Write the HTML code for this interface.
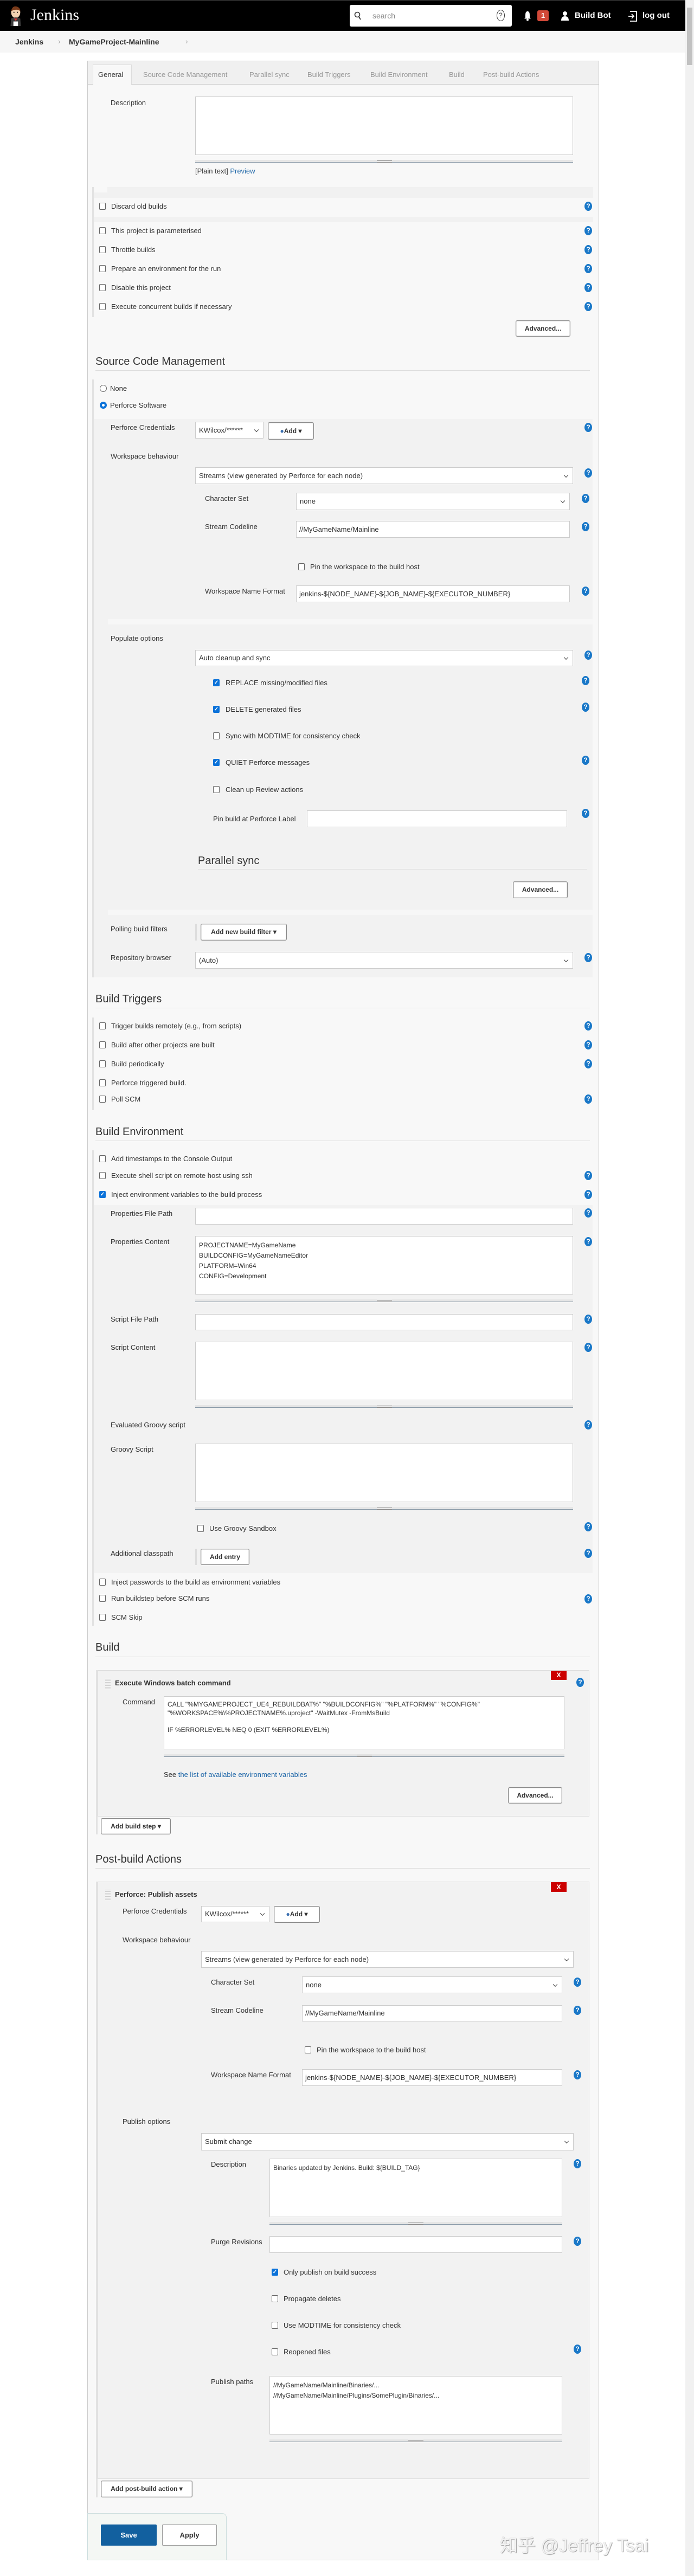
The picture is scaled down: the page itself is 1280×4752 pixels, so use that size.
<!DOCTYPE html>
<html><head><meta charset="utf-8">
<style>
*{box-sizing:border-box}
body{margin:0;width:1280px;height:4752px;position:relative;background:#fff;font-family:"Liberation Sans",sans-serif;overflow:hidden}
.a{position:absolute}
.l{position:absolute;font-size:13px;line-height:16px;color:#333;white-space:nowrap}
.f{position:absolute;background:#fff;border:1px solid #ccc;font-size:13px;color:#333;padding:0 6px;white-space:nowrap;overflow:hidden}
.s::after{content:"";position:absolute;right:9px;top:50%;width:5px;height:5px;border-right:1.5px solid #333;border-bottom:1.5px solid #333;transform:translateY(-70%) rotate(45deg)}
.h{position:absolute;width:14px;height:17px;border-radius:50%;background:#1a78c8;color:#fff;font-weight:bold;font-size:12px;line-height:17px;text-align:center}
.c{position:absolute;width:12px;height:13px;border:1px solid #666;border-radius:2px;background:#fff}
.cc{background:#0b72d9;border-color:#0b72d9;color:#fff;font-size:10px;line-height:12px;text-align:center;font-weight:bold}
.r{position:absolute;width:13px;height:13px;border:1px solid #666;border-radius:50%;background:#fff}
.b{position:absolute;background:#fff;border:1px solid #888;box-shadow:inset 0 0 0 1px #ddd;border-radius:3px;font-size:12px;font-weight:bold;color:#333;text-align:center;white-space:nowrap}
.rz{position:absolute;height:5px;background:#e6e6e6;border-bottom:1px solid #8a9aa8}
.rz::after{content:"";position:absolute;left:50%;margin-left:-14px;width:28px;top:1px;height:2px;border-top:1px solid #888;border-bottom:1px solid #888}
.hd{position:absolute;font-size:20px;color:#333;white-space:nowrap}
.hl{position:absolute;height:1px;background:#ddd}
.lb{position:absolute;width:3px;background:#e2e2e2}
.nb{position:absolute;background:#f2f2f2}
.ta{position:absolute;background:#fff;border:1px solid #ccc;font-size:12px;color:#333;padding:4px 6px;white-space:pre;line-height:19px}
</style></head><body>

<!-- header -->
<div class="a" style="left:0;top:0;width:1280px;height:57px;background:#000;border-top:1px solid #444"></div>
<svg class="a" style="left:14px;top:10px" width="32" height="38" viewBox="0 0 30 36">
<ellipse cx="14" cy="12" rx="8" ry="10" fill="#f0d0b0"/><path d="M6 10 Q8 0 16 2 Q22 4 22 10 Q16 5 6 10Z" fill="#7a3b1a"/>
<path d="M6 23 Q14 19 22 23 L23 36 L5 36Z" fill="#3b3b3b"/><path d="M11 23 L17 23 L14 27Z" fill="#d33"/><rect x="10" y="28" width="8" height="8" fill="#fff"/>
<circle cx="11" cy="12" r="1" fill="#000"/><circle cx="17" cy="12" r="1" fill="#000"/></svg>
<div class="a" style="left:56px;top:12px;font-family:'Liberation Serif',serif;font-size:30px;color:#fff;line-height:32px">Jenkins</div>
<div class="a" style="left:645px;top:9px;width:299px;height:40px;background:#fff;border-radius:3px"></div>
<svg class="a" style="left:653px;top:19px" width="14" height="20" viewBox="0 0 14 18"><circle cx="6" cy="7" r="4.5" fill="none" stroke="#333" stroke-width="1.6"/><path d="M9 11 L12 16" stroke="#333" stroke-width="1.8"/></svg>
<div class="a" style="left:687px;top:21px;font-size:14px;color:#888">search</div>
<div class="a" style="left:916px;top:18px;width:15px;height:21px;border:1.5px solid #333;border-radius:50%;font-size:12px;line-height:18px;text-align:center;color:#333">?</div>
<svg class="a" style="left:966px;top:18px" width="14" height="22" viewBox="0 0 14 19"><path d="M7 1 Q3 2 3 8 L3 13 L1 15 L13 15 L11 13 L11 8 Q11 2 7 1Z" fill="#fff"/><circle cx="7" cy="17" r="2" fill="#fff"/></svg>
<div class="a" style="left:991px;top:19px;width:21px;height:20px;background:#d24939;border-radius:3px;color:#fff;font-size:13px;font-weight:bold;text-align:center;line-height:20px">1</div>
<svg class="a" style="left:1034px;top:19px" width="16" height="20" viewBox="0 0 16 18"><circle cx="8" cy="5" r="4" fill="#fff"/><path d="M1 18 Q1 10 8 10 Q15 10 15 18Z" fill="#fff"/></svg>
<div class="a" style="left:1060px;top:20px;font-size:15px;font-weight:bold;color:#fff">Build Bot</div>
<svg class="a" style="left:1158px;top:18px" width="22" height="24" viewBox="0 0 22 22"><path d="M4 2 H16 V20 H4" fill="none" stroke="#fff" stroke-width="1.8"/><path d="M1 11 H11 M7 7 L11 11 L7 15" fill="none" stroke="#fff" stroke-width="1.8"/></svg>
<div class="a" style="left:1185px;top:20px;font-size:15px;font-weight:bold;color:#fff">log out</div>

<!-- scrollbar -->
<div class="a" style="left:1264px;top:0;width:16px;height:4752px;background:#f1f1f1"></div>
<div class="a" style="left:1267px;top:14px;width:10px;height:106px;background:#c1c1c1"></div>

<!-- breadcrumb -->
<div class="a" style="left:0;top:57px;width:1264px;height:40px;background:#f6f6f6"></div>
<div class="a" style="left:28px;top:69px;font-size:14px;font-weight:bold;color:#333">Jenkins</div>
<div class="a" style="left:107px;top:68px;font-size:14px;color:#aaa">›</div>
<div class="a" style="left:127px;top:69px;font-size:14px;font-weight:bold;color:#333">MyGameProject-Mainline</div>
<div class="a" style="left:342px;top:68px;font-size:14px;color:#aaa">›</div>

<!-- main panel -->
<div class="a" style="left:161px;top:112px;width:944px;height:4611px;background:#f8f8f8;border:1px solid #ccc"></div>
<div class="a" style="left:162px;top:113px;width:942px;height:43px;background:#f0f0f0;border-bottom:1px solid #ccc"></div>
<div class="a" style="left:171px;top:119px;width:72px;height:38px;background:#f8f8f8;border:1px solid #ddd;border-bottom:none"></div>
<div class="l" style="left:181px;top:130px;color:#333">General</div>
<div class="l" style="left:264px;top:130px;color:#999">Source Code Management</div>
<div class="l" style="left:460px;top:130px;color:#999">Parallel sync</div>
<div class="l" style="left:567px;top:130px;color:#999">Build Triggers</div>
<div class="l" style="left:683px;top:130px;color:#999">Build Environment</div>
<div class="l" style="left:828px;top:130px;color:#999">Build</div>
<div class="l" style="left:891px;top:130px;color:#999">Post-build Actions</div>

<!-- General -->
<div class="l" style="left:204px;top:182px">Description</div>
<div class="f" style="left:360px;top:178px;width:697px;height:108px"></div>
<div class="rz" style="left:360px;top:295px;width:697px"></div>
<div class="l" style="left:360px;top:308px">[Plain text] <span style="color:#1f67a8">Preview</span></div>

<div class="lb" style="left:170px;top:345px;height:240px"></div>
<div class="a" style="left:198px;top:345px;width:896px;height:10px;background:#f1f1f1"></div>
<div class="a" style="left:173px;top:355px;width:921px;height:10px;background:#f1f1f1"></div>
<div class="c" style="left:183px;top:374px"></div><div class="l" style="left:205px;top:373px">Discard old builds</div><div class="h" style="left:1078px;top:372px">?</div>
<div class="a" style="left:173px;top:400px;width:921px;height:10px;background:#f1f1f1"></div>
<div class="c" style="left:183px;top:419px"></div><div class="l" style="left:205px;top:418px">This project is parameterised</div><div class="h" style="left:1078px;top:417px">?</div>
<div class="c" style="left:183px;top:454px"></div><div class="l" style="left:205px;top:453px">Throttle builds</div><div class="h" style="left:1078px;top:452px">?</div>
<div class="c" style="left:183px;top:489px"></div><div class="l" style="left:205px;top:488px">Prepare an environment for the run</div><div class="h" style="left:1078px;top:487px">?</div>
<div class="c" style="left:183px;top:524px"></div><div class="l" style="left:205px;top:523px">Disable this project</div><div class="h" style="left:1078px;top:522px">?</div>
<div class="c" style="left:183px;top:559px"></div><div class="l" style="left:205px;top:558px">Execute concurrent builds if necessary</div><div class="h" style="left:1078px;top:557px">?</div>
<div class="b" style="left:951px;top:591px;width:101px;height:30px;line-height:28px">Advanced...</div>

<!-- SCM -->
<div class="hd" style="left:176px;top:656px">Source Code Management</div>
<div class="hl" style="left:176px;top:683px;width:912px"></div>
<div class="lb" style="left:170px;top:700px;height:1103px"></div>
<div class="r" style="left:184px;top:710px"></div><div class="l" style="left:203px;top:709px">None</div>
<div class="r" style="left:184px;top:741px;border:4px solid #0b72d9"></div><div class="l" style="left:203px;top:740px">Perforce Software</div>
<div class="nb" style="left:173px;top:773px;width:920px;height:1030px"></div>
<div class="l" style="left:204px;top:781px">Perforce Credentials</div>
<div class="f s" style="left:360px;top:778px;width:126px;height:31px;line-height:29px">KWilcox/******</div>
<div class="b" style="left:494px;top:779px;width:85px;height:32px;line-height:30px"><span style="color:#3a6fb0">&#9679;</span>Add &#9662;</div>
<div class="h" style="left:1078px;top:780px">?</div>
<div class="l" style="left:204px;top:834px">Workspace behaviour</div>
<div class="f s" style="left:360px;top:862px;width:697px;height:31px;line-height:29px">Streams (view generated by Perforce for each node)</div>
<div class="h" style="left:1078px;top:864px">?</div>
<div class="l" style="left:378px;top:912px">Character Set</div>
<div class="f s" style="left:546px;top:909px;width:505px;height:32px;line-height:30px">none</div>
<div class="h" style="left:1073px;top:911px">?</div>
<div class="l" style="left:378px;top:964px">Stream Codeline</div>
<div class="f" style="left:546px;top:961px;width:505px;height:31px;line-height:29px;padding-left:5px">//MyGameName/Mainline</div>
<div class="h" style="left:1073px;top:963px">?</div>
<div class="c" style="left:550px;top:1039px"></div><div class="l" style="left:572px;top:1038px">Pin the workspace to the build host</div>
<div class="l" style="left:378px;top:1083px">Workspace Name Format</div>
<div class="f" style="left:546px;top:1080px;width:505px;height:31px;line-height:29px;padding-left:5px">jenkins-${NODE_NAME}-${JOB_NAME}-${EXECUTOR_NUMBER}</div>
<div class="h" style="left:1073px;top:1082px">?</div>

<div class="a" style="left:199px;top:1142px;width:894px;height:10px;background:#f7f7f7"></div>
<div class="l" style="left:204px;top:1170px">Populate options</div>
<div class="f s" style="left:360px;top:1199px;width:697px;height:30px;line-height:28px">Auto cleanup and sync</div>
<div class="h" style="left:1078px;top:1200px">?</div>
<div class="c cc" style="left:393px;top:1253px">✓</div><div class="l" style="left:416px;top:1252px">REPLACE missing/modified files</div><div class="h" style="left:1073px;top:1247px">?</div>
<div class="c cc" style="left:393px;top:1302px">✓</div><div class="l" style="left:416px;top:1301px">DELETE generated files</div><div class="h" style="left:1073px;top:1296px">?</div>
<div class="c" style="left:393px;top:1351px"></div><div class="l" style="left:416px;top:1350px">Sync with MODTIME for consistency check</div>
<div class="c cc" style="left:393px;top:1400px">✓</div><div class="l" style="left:416px;top:1399px">QUIET Perforce messages</div><div class="h" style="left:1073px;top:1394px">?</div>
<div class="c" style="left:393px;top:1450px"></div><div class="l" style="left:416px;top:1449px">Clean up Review actions</div>
<div class="l" style="left:393px;top:1503px">Pin build at Perforce Label</div>
<div class="f" style="left:566px;top:1495px;width:480px;height:31px"></div>
<div class="h" style="left:1073px;top:1492px">?</div>
<div class="hd" style="left:365px;top:1577px">Parallel sync</div>
<div class="hl" style="left:365px;top:1603px;width:718px"></div>
<div class="b" style="left:946px;top:1626px;width:101px;height:31px;line-height:29px">Advanced...</div>
<div class="a" style="left:199px;top:1678px;width:894px;height:10px;background:#f7f7f7"></div>
<div class="l" style="left:204px;top:1706px">Polling build filters</div>
<div class="a" style="left:360px;top:1704px;width:3px;height:31px;background:#ddd"></div>
<div class="b" style="left:370px;top:1704px;width:159px;height:31px;line-height:29px">Add new build filter &#9662;</div>
<div class="l" style="left:204px;top:1759px">Repository browser</div>
<div class="f s" style="left:360px;top:1756px;width:697px;height:31px;line-height:29px">(Auto)</div>
<div class="h" style="left:1078px;top:1758px">?</div>

<!-- Build Triggers -->
<div class="hd" style="left:176px;top:1832px">Build Triggers</div>
<div class="hl" style="left:176px;top:1859px;width:912px"></div>
<div class="lb" style="left:170px;top:1877px;height:171px"></div>
<div class="c" style="left:183px;top:1886px"></div><div class="l" style="left:205px;top:1885px">Trigger builds remotely (e.g., from scripts)</div><div class="h" style="left:1078px;top:1884px">?</div>
<div class="c" style="left:183px;top:1921px"></div><div class="l" style="left:205px;top:1920px">Build after other projects are built</div><div class="h" style="left:1078px;top:1919px">?</div>
<div class="c" style="left:183px;top:1956px"></div><div class="l" style="left:205px;top:1955px">Build periodically</div><div class="h" style="left:1078px;top:1954px">?</div>
<div class="c" style="left:183px;top:1991px"></div><div class="l" style="left:205px;top:1990px">Perforce triggered build.</div>
<div class="c" style="left:183px;top:2021px"></div><div class="l" style="left:205px;top:2020px">Poll SCM</div><div class="h" style="left:1078px;top:2019px">?</div>

<!-- Build Environment -->
<div class="hd" style="left:176px;top:2077px">Build Environment</div>
<div class="hl" style="left:176px;top:2104px;width:912px"></div>
<div class="lb" style="left:170px;top:2122px;height:877px"></div>
<div class="c" style="left:183px;top:2131px"></div><div class="l" style="left:205px;top:2130px">Add timestamps to the Console Output</div>
<div class="c" style="left:183px;top:2162px"></div><div class="l" style="left:205px;top:2161px">Execute shell script on remote host using ssh</div><div class="h" style="left:1078px;top:2160px">?</div>
<div class="c cc" style="left:183px;top:2197px">✓</div><div class="l" style="left:205px;top:2196px">Inject environment variables to the build process</div><div class="h" style="left:1078px;top:2195px">?</div>
<div class="nb" style="left:173px;top:2223px;width:920px;height:679px"></div>
<div class="l" style="left:204px;top:2231px">Properties File Path</div>
<div class="f" style="left:360px;top:2228px;width:697px;height:31px"></div>
<div class="h" style="left:1078px;top:2229px">?</div>
<div class="l" style="left:204px;top:2283px">Properties Content</div>
<div class="ta" style="left:360px;top:2280px;width:697px;height:108px;padding-top:7px">PROJECTNAME=MyGameName
BUILDCONFIG=MyGameNameEditor
PLATFORM=Win64
CONFIG=Development</div>
<div class="h" style="left:1078px;top:2282px">?</div>
<div class="rz" style="left:360px;top:2397px;width:697px"></div>
<div class="l" style="left:204px;top:2426px">Script File Path</div>
<div class="f" style="left:360px;top:2424px;width:697px;height:30px"></div>
<div class="h" style="left:1078px;top:2425px">?</div>
<div class="l" style="left:204px;top:2478px">Script Content</div>
<div class="f" style="left:360px;top:2475px;width:697px;height:108px"></div>
<div class="h" style="left:1078px;top:2477px">?</div>
<div class="rz" style="left:360px;top:2592px;width:697px"></div>
<div class="l" style="left:204px;top:2621px">Evaluated Groovy script</div>
<div class="h" style="left:1078px;top:2620px">?</div>
<div class="l" style="left:204px;top:2666px">Groovy Script</div>
<div class="f" style="left:360px;top:2663px;width:697px;height:108px"></div>
<div class="rz" style="left:360px;top:2780px;width:697px"></div>
<div class="c" style="left:364px;top:2813px"></div><div class="l" style="left:386px;top:2812px">Use Groovy Sandbox</div><div class="h" style="left:1078px;top:2808px">?</div>
<div class="l" style="left:204px;top:2858px">Additional classpath</div>
<div class="a" style="left:360px;top:2857px;width:3px;height:30px;background:#ddd"></div>
<div class="b" style="left:370px;top:2857px;width:90px;height:30px;line-height:28px">Add entry</div>
<div class="h" style="left:1078px;top:2857px">?</div>
<div class="c" style="left:183px;top:2912px"></div><div class="l" style="left:205px;top:2911px">Inject passwords to the build as environment variables</div>
<div class="c" style="left:183px;top:2942px"></div><div class="l" style="left:205px;top:2941px">Run buildstep before SCM runs</div><div class="h" style="left:1078px;top:2941px">?</div>
<div class="c" style="left:183px;top:2977px"></div><div class="l" style="left:205px;top:2976px">SCM Skip</div>

<!-- Build -->
<div class="hd" style="left:176px;top:3028px">Build</div>
<div class="hl" style="left:176px;top:3056px;width:912px"></div>
<div class="lb" style="left:177px;top:3081px;height:303px"></div>
<div class="a" style="left:180px;top:3081px;width:907px;height:270px;background:#f2f2f2;border:1px solid #ddd"></div>
<div class="a" style="left:1016px;top:3082px;width:29px;height:17px;background:#c00;color:#fff;font-size:12px;font-weight:bold;text-align:center;line-height:17px">X</div>
<div class="h" style="left:1063px;top:3095px">?</div>
<div class="a" style="left:194px;top:3096px;width:10px;height:20px;background:repeating-linear-gradient(0deg,#ccc 0 1px,transparent 1px 3px)"></div>
<div class="l" style="left:212px;top:3097px;font-weight:bold">Execute Windows batch command</div>
<div class="l" style="left:226px;top:3132px">Command</div>
<div class="ta" style="left:302px;top:3129px;width:739px;height:98px;line-height:15.5px;padding-top:7px">CALL "%MYGAMEPROJECT_UE4_REBUILDBAT%" "%BUILDCONFIG%" "%PLATFORM%" "%CONFIG%"
"%WORKSPACE%\%PROJECTNAME%.uproject" -WaitMutex -FromMsBuild

IF %ERRORLEVEL% NEQ 0 (EXIT %ERRORLEVEL%)</div>
<div class="rz" style="left:302px;top:3236px;width:739px"></div>
<div class="l" style="left:302px;top:3266px">See <span style="color:#1f67a8">the list of available environment variables</span></div>
<div class="b" style="left:937px;top:3297px;width:100px;height:30px;line-height:28px">Advanced...</div>
<div class="b" style="left:186px;top:3354px;width:129px;height:30px;line-height:28px">Add build step &#9662;</div>

<!-- Post-build -->
<div class="hd" style="left:176px;top:3419px">Post-build Actions</div>
<div class="hl" style="left:176px;top:3446px;width:912px"></div>
<div class="lb" style="left:177px;top:3471px;height:1136px"></div>
<div class="a" style="left:180px;top:3471px;width:907px;height:1102px;background:#f2f2f2;border:1px solid #ddd"></div>
<div class="a" style="left:1016px;top:3472px;width:29px;height:18px;background:#c00;color:#fff;font-size:12px;font-weight:bold;text-align:center;line-height:18px">X</div>
<div class="a" style="left:194px;top:3485px;width:10px;height:20px;background:repeating-linear-gradient(0deg,#ccc 0 1px,transparent 1px 3px)"></div>
<div class="l" style="left:212px;top:3487px;font-weight:bold">Perforce: Publish assets</div>
<div class="l" style="left:226px;top:3518px">Perforce Credentials</div>
<div class="f s" style="left:371px;top:3516px;width:126px;height:30px;line-height:28px">KWilcox/******</div>
<div class="b" style="left:505px;top:3516px;width:85px;height:31px;line-height:29px"><span style="color:#3a6fb0">&#9679;</span>Add &#9662;</div>
<div class="l" style="left:226px;top:3571px">Workspace behaviour</div>
<div class="f s" style="left:371px;top:3599px;width:687px;height:31px;line-height:29px">Streams (view generated by Perforce for each node)</div>
<div class="l" style="left:389px;top:3649px">Character Set</div>
<div class="f s" style="left:557px;top:3646px;width:480px;height:31px;line-height:29px">none</div>
<div class="h" style="left:1058px;top:3648px">?</div>
<div class="l" style="left:389px;top:3701px">Stream Codeline</div>
<div class="f" style="left:557px;top:3699px;width:480px;height:30px;line-height:28px;padding-left:5px">//MyGameName/Mainline</div>
<div class="h" style="left:1058px;top:3700px">?</div>
<div class="c" style="left:562px;top:3775px"></div><div class="l" style="left:584px;top:3774px">Pin the workspace to the build host</div>
<div class="l" style="left:389px;top:3820px">Workspace Name Format</div>
<div class="f" style="left:557px;top:3817px;width:480px;height:31px;line-height:29px;padding-left:5px">jenkins-${NODE_NAME}-${JOB_NAME}-${EXECUTOR_NUMBER}</div>
<div class="h" style="left:1058px;top:3819px">?</div>
<div class="l" style="left:226px;top:3906px">Publish options</div>
<div class="f s" style="left:371px;top:3935px;width:687px;height:32px;line-height:30px">Submit change</div>
<div class="l" style="left:389px;top:3985px">Description</div>
<div class="ta" style="left:497px;top:3982px;width:540px;height:108px;font-size:12px;line-height:16px;padding-top:8px">Binaries updated by Jenkins. Build: ${BUILD_TAG}</div>
<div class="h" style="left:1058px;top:3983px">?</div>
<div class="rz" style="left:497px;top:4099px;width:540px"></div>
<div class="l" style="left:389px;top:4128px">Purge Revisions</div>
<div class="f" style="left:497px;top:4125px;width:540px;height:31px"></div>
<div class="h" style="left:1058px;top:4126px">?</div>
<div class="c cc" style="left:501px;top:4185px">✓</div><div class="l" style="left:523px;top:4184px">Only publish on build success</div>
<div class="c" style="left:501px;top:4234px"></div><div class="l" style="left:523px;top:4233px">Propagate deletes</div>
<div class="c" style="left:501px;top:4283px"></div><div class="l" style="left:523px;top:4282px">Use MODTIME for consistency check</div>
<div class="c" style="left:501px;top:4332px"></div><div class="l" style="left:523px;top:4331px">Reopened files</div><div class="h" style="left:1058px;top:4325px">?</div>
<div class="l" style="left:389px;top:4386px">Publish paths</div>
<div class="ta" style="left:497px;top:4383px;width:540px;height:108px;line-height:19px;padding-top:7px">//MyGameName/Mainline/Binaries/...
//MyGameName/Mainline/Plugins/SomePlugin/Binaries/...</div>
<div class="rz" style="left:497px;top:4500px;width:540px"></div>
<div class="b" style="left:186px;top:4576px;width:169px;height:31px;line-height:29px">Add post-build action &#9662;</div>

<!-- bottom bar -->
<div class="a" style="left:161px;top:4636px;width:257px;height:87px;background:#f4f7f4;border:1px solid #cdd;border-top-right-radius:8px"></div>
<div class="a" style="left:186px;top:4657px;width:103px;height:39px;background:#12609f;border-radius:2px;color:#fff;font-size:13px;font-weight:bold;text-align:center;line-height:39px">Save</div>
<div class="a" style="left:299px;top:4657px;width:101px;height:39px;background:#fff;border:1px solid #999;border-radius:2px;color:#333;font-size:13px;font-weight:bold;text-align:center;line-height:37px">Apply</div>

<div class="a" style="left:922px;top:4676px;font-family:'Liberation Sans','Noto Sans CJK SC',sans-serif;font-size:33px;line-height:40px;color:rgba(245,245,245,0.95);text-shadow:0 0 1px #aaa,1px 1px 1px #999;white-space:nowrap">知乎 @Jeffrey Tsai</div>
</body></html>
